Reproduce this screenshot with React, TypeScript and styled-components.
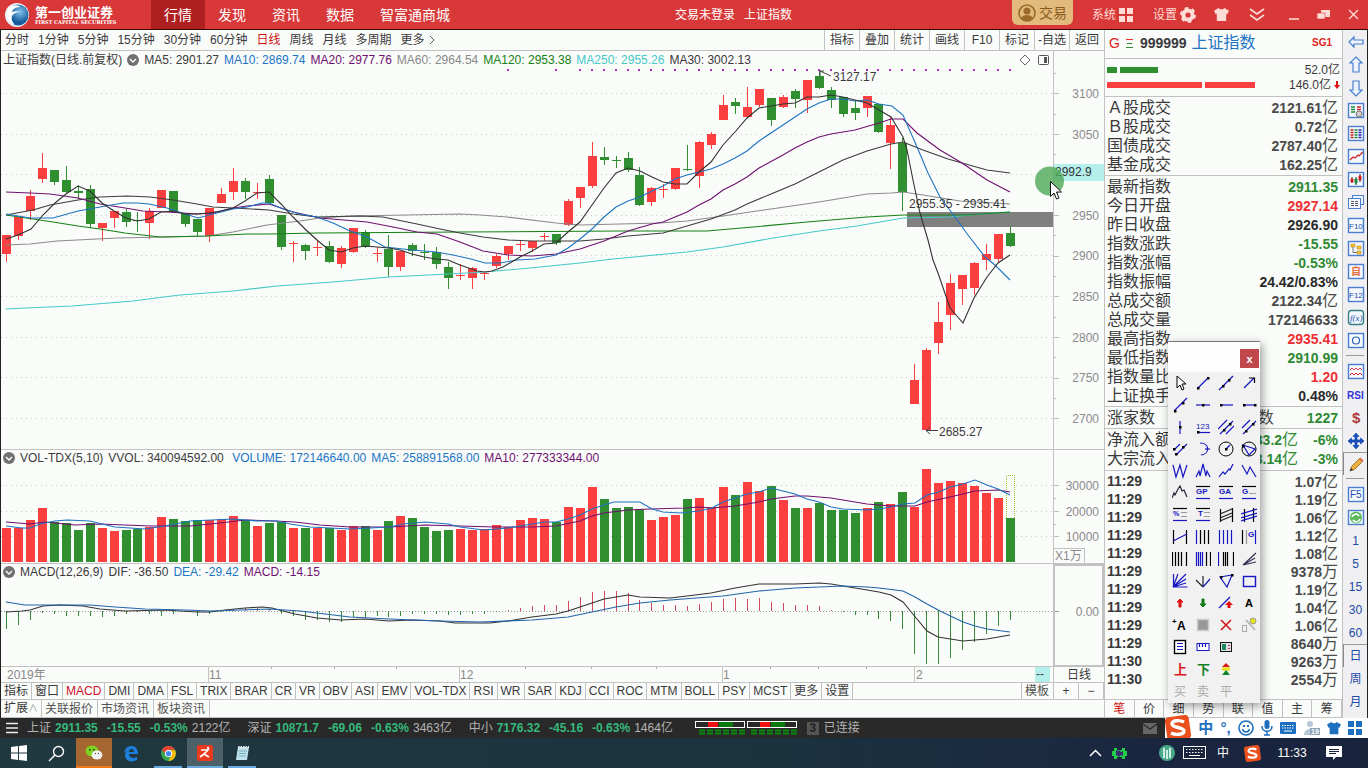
import React from "react";
import styled, { createGlobalStyle, css } from "styled-components";

const RED = "#fb3f41";
const GREEN = "#2f8f31";
const LINE = "#c2c2c2";
const INK = "#3a3a3a";
const SANS = `"Liberation Sans", "Noto Sans CJK SC", sans-serif`;

const Global = createGlobalStyle`
  * { box-sizing: border-box; }
  body { margin: 0; background: #fafcfa; color: ${INK}; font: 12px/16px ${SANS}; overflow: hidden; }
  button { font: inherit; color: inherit; background: none; border: 0; padding: 0; margin: 0; white-space: nowrap; cursor: pointer; }
  svg { display: block; flex: none; }
  table { border-collapse: collapse; border-spacing: 0; width: 100%; }
  td, th { padding: 0; font-weight: 400; text-align: left; white-space: nowrap; }
`;

const Page = styled.div`
  position: relative;
  min-height: 100vh;
  display: flex;
  flex-direction: column;
  overflow: hidden;
`;

/* ---------- title bar ---------- */
const TitleBar = styled.header`
  height: 30px;
  display: flex;
  align-items: stretch;
  background: #d83838;
  border-bottom: 1px solid #3a0808;
  color: #fff;
`;
const Brand = styled.div`
  width: 151px;
  display: flex;
  align-items: center;
  gap: 6px;
  padding-left: 5px;
`;
const BrandText = styled.div`
  display: flex;
  flex-direction: column;
  white-space: nowrap;
`;
const BrandName = styled.strong`
  font: 700 13px/15px "Noto Sans CJK SC", sans-serif;
`;
const BrandSub = styled.span`
  font: 700 5px/7px "DejaVu Serif", serif;
`;
const Nav = styled.nav`
  display: flex;
`;
const NavButton = styled.button<{ $on?: boolean }>`
  padding: 0 13px;
  font-size: 14px;
  background: ${(p) => (p.$on ? "#ae2020" : "transparent")};
`;
const TitleText = styled.div`
  flex: 1;
  display: flex;
  justify-content: center;
  align-items: center;
  gap: 9px;
  padding-right: 8px;
`;
const TitleTools = styled.div`
  display: flex;
  align-items: center;
  padding-right: 9px;
  color: #ffdcd6;
`;
const TradeButton = styled.button`
  align-self: flex-start;
  width: 61px;
  height: 25px;
  margin-right: 19px;
  display: flex;
  align-items: center;
  justify-content: center;
  gap: 3px;
  border-radius: 0 0 6px 6px;
  background: #e2ba7c;
  color: #8a5a1c;
  font-size: 14px;
`;
const TitleTool = styled.button<{ $gap: number }>`
  display: flex;
  align-items: center;
  gap: 3px;
  margin-right: ${(p) => p.$gap}px;
`;

/* ---------- layout ---------- */
const Body = styled.main`
  flex: 1;
  display: flex;
  border-left: 1px solid #222;
  border-right: 1px solid #222;
`;
const Charts = styled.section`
  flex: 1;
  min-width: 0;
  display: flex;
  flex-direction: column;
`;
const Bar = styled.div<{ $h: number }>`
  height: ${(p) => p.$h}px;
  display: flex;
  align-items: stretch;
  border-bottom: 1px solid ${LINE};
`;
const PeriodList = styled.div`
  flex: 1;
  display: flex;
  gap: 9px;
  padding-left: 4px;
`;
const Period = styled.button<{ $on?: boolean }>`
  display: flex;
  align-items: center;
  gap: 4px;
  color: ${(p) => (p.$on ? "#d00f0f" : INK)};
`;
const Action = styled.button`
  width: 35px;
  border-left: 1px solid ${LINE};
`;
const Panel = styled.div`
  display: flex;
  border-bottom: 1px solid ${LINE};
`;
const Plot = styled.div`
  flex: 1;
  min-width: 0;
  position: relative;
`;
const Legend = styled.div<{ $h: number }>`
  height: ${(p) => p.$h}px;
  display: flex;
  align-items: center;
  gap: 5px;
  padding-left: 2px;
  white-space: nowrap;
`;
const Swatch = styled.span<{ $c: string }>`
  color: ${(p) => p.$c};
`;
const Spacer = styled.span`
  flex: 1;
`;
const Axis = styled.div<{ $framed?: boolean }>`
  width: 51px;
  border-left: 1px solid ${LINE};
  ${(p) =>
    p.$framed &&
    css`
      border: 2px solid ${LINE};
      border-bottom-width: 1px;
    `}
`;
const DateText = styled.div`
  flex: 1;
`;
const DateCell = styled.button`
  width: 51px;
  border-left: 1px solid ${LINE};
`;
const Tab = styled.button<{ $on?: boolean }>`
  padding: 0 3px;
  border-right: 1px solid ${LINE};
  color: ${(p) => (p.$on ? "#d0102a" : INK)};
`;
const Caret = styled.span`
  font-size: 10px;
  color: #999;
`;
const WideTab = styled(Tab)`
  padding: 0 4px 0 3px;
  color: #555;
`;
const TemplateTab = styled(WideTab)`
  border-left: 1px solid ${LINE};
`;
const ZoomTab = styled(Tab)`
  width: 25px;
`;

/* ---------- quote panel ---------- */
const Quote = styled.aside`
  width: 238px;
  display: flex;
  flex-direction: column;
  border-left: 1px solid ${LINE};
`;
const QuoteHead = styled.div`
  height: 29px;
  display: flex;
  align-items: center;
  gap: 5px;
  padding: 0 10px 2px 4px;
  border-bottom: 1px solid ${LINE};
  font-size: 14px;
`;
const QuoteCode = styled.span`
  color: #e02222;
`;
const QuoteName = styled.span`
  flex: 1;
  font-size: 16px;
  color: #1b75c4;
`;
const Sig = styled.b`
  font-size: 10px;
  color: #e02222;
`;
const Flow = styled.div`
  height: 38px;
  padding: 3px 2px 0 2px;
  border-bottom: 1px solid ${LINE};
`;
const FlowRow = styled.div`
  height: 15px;
  display: flex;
  align-items: center;
  gap: 3px;
`;
const FlowBar = styled.i<{ $w: number; $c: string }>`
  width: ${(p) => p.$w}px;
  height: 6px;
  background: ${(p) => p.$c};
`;
const Group = styled.div<{ $h?: number }>`
  padding: 1px 4px 0 2px;
  border-bottom: 1px solid ${LINE};
  ${(p) => (p.$h ? `height: ${p.$h}px;` : "flex: 1;")}
`;
const Row = styled.tr<{ $h: number }>`
  height: ${(p) => p.$h}px;
  line-height: ${(p) => p.$h - 1}px;
  font-size: 16px;
`;
const Value = styled.td<{ $c?: string }>`
  && {
    text-align: right;
  }
  color: ${(p) => p.$c || "#4a4a4a"};
  b {
    font-size: 14px;
    line-height: 12px;
  }
`;
const MidValue = styled(Value)<{ $pad: number }>`
  width: 100%;
  && {
    padding-right: ${(p) => p.$pad}px;
  }
`;
const Time = styled.th`
  && {
    font-size: 14px;
    font-weight: 700;
  }
`;
const QuoteTabs = styled.div`
  height: 18px;
  display: flex;
  border-bottom: 1px solid ${LINE};
`;
const QuoteTab = styled.button<{ $on?: boolean }>`
  flex: 1;
  border-right: 1px solid ${LINE};
  color: ${(p) => (p.$on ? "#d00f0f" : INK)};
`;

/* ---------- side icons ---------- */
const Side = styled.nav`
  width: 25px;
  display: flex;
  flex-direction: column;
  align-items: stretch;
  background: #f0f0f2;
  border-left: 1px solid ${LINE};
`;
const SideButton = styled.button<{ $down?: boolean }>`
  height: 23px;
  display: flex;
  align-items: center;
  justify-content: center;
  color: #1c4aa8;
  border-left: 1px solid ${(p) => (p.$down ? "#888" : "transparent")};
  border-top: 1px solid ${(p) => (p.$down ? "#999" : "transparent")};
`;
const SideRule = styled.hr`
  width: 18px;
  height: 1px;
  margin: 3px auto 4px;
  border: 0;
  background: #999;
`;

/* ---------- drawing tools ---------- */
const Palette = styled.section`
  position: absolute;
  right: 108px;
  top: 341px;
  width: 92px;
  height: 362px;
  background: #f1f1f1;
  border-top: 1px solid #777;
  box-shadow: 2px 3px 9px rgba(0, 0, 0, 0.4);
`;
const PaletteTop = styled.div`
  height: 30px;
  display: flex;
  justify-content: flex-end;
  padding: 7px 1px 4px 0;
  background: #fdfdfd;
`;
const CloseButton = styled.button`
  width: 19px;
  background: #c0474c;
  color: #fff;
  font-weight: 700;
  font-size: 11px;
`;
const ToolGrid = styled.div`
  display: grid;
  grid-template-columns: repeat(4, 23px);
  grid-auto-rows: 22px;
`;
const Tool = styled.button`
  display: flex;
  align-items: center;
  justify-content: center;
`;

/* ---------- bottom bars ---------- */
const Status = styled.footer`
  height: 20px;
  display: flex;
  align-items: center;
  padding-left: 6px;
  background: #292929;
  color: #b4b4b4;
  white-space: nowrap;
`;
const Indices = styled.div`
  display: flex;
  gap: 17px;
  padding-left: 8px;
`;
const Index = styled.span`
  display: flex;
  align-items: center;
  gap: 4px;
  b {
    color: #35b87c;
    font-size: 12px;
  }
  b + b {
    margin-left: 5px;
  }
`;
const Badge = styled.b`
  width: 12px;
  height: 13px;
  margin: 0 5px 0 10px;
  background: #555;
  color: #222;
  line-height: 13px;
  text-align: center;
`;
const Ime = styled.div`
  height: 21px;
  width: 203px;
  display: flex;
  align-items: center;
  justify-content: space-between;
  padding-right: 6px;
  background: #fff;
  color: #1d6fc0;
  font-size: 15px;
`;
const Taskbar = styled.footer`
  height: 30px;
  display: flex;
  align-items: stretch;
  background: linear-gradient(90deg, #20383f, #1b333f 55%, #1a2640 85%, #18243c);
  color: #fff;
`;
const Task = styled.button<{ $w: number; $bg?: string; $line?: string; $gap?: number }>`
  width: ${(p) => p.$w}px;
  margin-right: ${(p) => p.$gap || 0}px;
  display: flex;
  align-items: center;
  justify-content: center;
  background: ${(p) => p.$bg || "transparent"};
  border-top: 2px solid transparent;
  border-bottom: 2px solid ${(p) => p.$line || "transparent"};
`;
const Tray = styled.div`
  margin-left: auto;
  display: flex;
  align-items: center;
  padding-right: 19px;
`;
const TrayItem = styled.button<{ $w: number; $gap?: number }>`
  width: ${(p) => p.$w}px;
  margin-right: ${(p) => p.$gap || 0}px;
  display: flex;
  justify-content: center;
`;

/* ---------- pointer ---------- */
const Pointer = styled.svg`
  position: absolute;
  left: 1035px;
  top: 166px;
  pointer-events: none;
`;

/* ---------- chart data ---------- */
const X0 = 6.5;
const STEP = 11.952;
const cx = (i: number) => Math.round(X0 + i * STEP - 0.5) + 0.5;

// kind, high, body top, body bottom, low
type Candle = [string, number, number, number, number];
const candles: Candle[] = [
  ["r", 235, 235, 254, 262], ["r", 217, 217, 236, 240], ["r", 190, 196, 211, 220], ["r", 153, 168, 179, 183],
  ["g", 170, 170, 182, 185], ["g", 166, 180, 192, 193], ["g", 185, 191, 193, 199], ["g", 185, 189, 224, 228],
  ["r", 223, 223, 228, 241], ["r", 211, 211, 218, 228], ["g", 209, 212, 222, 227], ["g", 212, 220, 221, 232],
  ["r", 208, 211, 223, 239], ["r", 190, 190, 208, 208], ["g", 191, 191, 212, 212], ["g", 213, 213, 224, 227],
  ["g", 219, 219, 232, 237], ["r", 208, 208, 236, 242], ["r", 188, 194, 203, 203], ["r", 168, 181, 192, 200],
  ["g", 178, 181, 192, 199], ["r", 183, 192, 193, 199], ["g", 175, 179, 203, 203], ["g", 215, 215, 247, 250],
  ["r", 241, 243, 244, 262], ["g", 244, 245, 251, 260], ["r", 241, 247, 248, 256], ["g", 241, 246, 262, 263],
  ["r", 246, 248, 264, 268], ["r", 228, 228, 252, 253], ["g", 230, 232, 247, 248], ["r", 247, 253, 254, 262],
  ["g", 235, 249, 267, 277], ["r", 251, 251, 267, 271], ["g", 243, 245, 251, 256], ["g", 244, 252, 253, 260],
  ["g", 247, 252, 264, 269], ["g", 262, 267, 278, 289], ["r", 264, 275, 276, 280], ["r", 267, 268, 278, 289],
  ["r", 272, 273, 274, 280], ["r", 254, 256, 266, 268], ["r", 246, 246, 254, 260], ["r", 240, 244, 245, 251],
  ["r", 241, 241, 248, 252], ["r", 233, 236, 237, 241], ["g", 234, 234, 243, 245], ["r", 199, 201, 225, 226],
  ["r", 187, 187, 198, 208], ["r", 142, 156, 186, 188], ["g", 147, 157, 160, 165], ["g", 156, 160, 161, 168],
  ["g", 152, 158, 170, 172], ["g", 167, 175, 205, 206], ["r", 187, 188, 202, 206], ["r", 184, 189, 190, 198],
  ["r", 168, 168, 189, 190], ["g", 145, 169, 170, 171], ["r", 141, 142, 176, 188], ["r", 132, 134, 145, 149],
  ["r", 95, 105, 120, 120], ["g", 98, 102, 106, 114], ["r", 87, 107, 117, 118], ["r", 89, 89, 105, 107],
  ["g", 98, 98, 120, 126], ["r", 95, 97, 107, 108], ["g", 89, 91, 99, 108], ["r", 80, 80, 100, 113],
  ["g", 71, 76, 88, 89], ["g", 87, 90, 100, 108], ["g", 97, 97, 114, 117], ["g", 100, 108, 113, 120],
  ["r", 96, 96, 108, 117], ["g", 104, 104, 132, 133], ["r", 117, 125, 143, 169], ["g", 138, 143, 192, 211],
  ["r", 364, 380, 404, 404], ["r", 348, 350, 430, 430], ["r", 302, 322, 343, 354], ["r", 274, 283, 315, 330],
  ["r", 275, 275, 289, 305], ["r", 262, 263, 288, 295], ["r", 244, 254, 260, 270], ["r", 234, 234, 259, 263],
  ["g", 227, 233, 246, 247],
];
const volumes = [
  528, 528, 520, 508, 522, 523, 530, 523, 528, 531, 530, 529, 527, 517, 519, 521, 520, 520, 519, 516, 520, 526, 523,
  522, 528, 528, 528, 528, 530, 526, 526, 530, 521, 516, 518, 527, 531, 530, 529, 530, 529, 525, 527, 520, 518, 519,
  522, 507, 508, 487, 499, 508, 507, 509, 520, 517, 515, 499, 498, 507, 487, 495, 482, 491, 486, 500, 508, 508, 503,
  510, 510, 513, 508, 502, 504, 492, 507, 469, 483, 481, 483, 486, 493, 498, 518,
];
const hist = [
  629, 625, 620, 613, 614, 616, 616, 616, 617, 616, 614, 612, 614, 616, 614, 612, 616, 614, 611, 609, 608, 608, 609,
  614, 616, 620, 620, 622, 622, 617, 617, 616, 617, 616, 614, 614, 614, 615, 615, 614, 614, 612, 610, 608, 606, 605,
  605, 601, 597, 592, 591, 591, 593, 600, 603, 605, 605, 606, 604, 602, 599, 598, 599, 598, 602, 603, 605, 605, 606,
  610, 612, 615, 615, 619, 621, 629, 654, 664, 664, 658, 650, 642, 634, 626, 620,
];

const ma = {
  m5: "6,239 18,235 31,229 43,215 55,203 66,194 78,186 90,191 102,203 114,211 126,218 137,221 149,219 161,212 173,211 185,214 197,214 209,213 221,211 233,208 245,201 257,193 269,192 281,204 293,217 305,229 317,240 329,250 341,252 353,248 365,246 389,248 400,250 412,254 424,257 436,259 448,260 460,265 477,271 485,272 492,271 503,267 520,257 532,251 544,244 556,243 568,232 580,222 592,205 604,188 616,173 628,168 640,171 652,177 663,182 675,184 687,184 699,172 711,162 723,145 735,132 747,118 759,108 771,106 783,104 795,103 807,97 819,97 831,95 843,97 855,100 867,103 879,110 891,117 903,137 907,150 913,180 920,213 928,240 933,260 938,273 950,308 963,323 974,298 987,277 998,263 1010,255",
  m10: "6,214 18,216 30,218 53,218 78,211 100,207 123,203 137,203 149,204 167,208 182,213 198,218 217,213 233,209 247,207 262,203 269,203 283,209 300,214 317,217 333,223 348,230 367,237 385,247 412,250 436,252 453,255 471,259 485,263 500,263 517,260 535,259 556,255 568,248 580,239 592,229 604,217 616,207 628,201 640,197 652,191 663,186 675,179 687,175 699,172 711,169 723,164 735,158 747,151 759,141 771,133 783,125 795,117 807,109 819,103 831,99 843,99 855,101 867,100 879,104 892,106 903,115 917,147 928,173 940,197 955,217 968,235 985,257 995,265 1010,280",
  m20: "6,192 30,193 50,194 78,198 100,204 125,208 143,211 167,212 198,214 213,213 233,208 247,206 269,204 293,212 320,218 367,222 393,227 417,232 437,234 460,242 483,251 508,255 532,256 556,254 580,249 604,241 616,236 628,231 652,224 663,222 675,217 687,212 699,205 711,199 723,190 735,184 747,177 759,168 783,155 795,148 807,142 819,137 831,134 855,130 879,123 891,119 903,119 917,133 940,150 962,163 987,180 1010,192",
  m30: "6,215 33,210 50,205 78,200 100,197 127,196 150,197 173,200 197,204 213,207 233,208 269,210 293,214 317,217 360,216 383,217 417,224 440,229 460,233 483,237 508,240 532,241 580,241 604,239 628,236 663,233 687,226 711,219 735,210 747,204 771,194 795,184 819,172 843,160 867,151 891,144 903,142 923,150 948,159 962,163 987,170 1010,173",
  m60: "6,245 30,244 57,241 117,238 167,237 207,236 233,232 267,225 300,221 320,218 350,216 407,215 460,214 480,215 507,217 556,223 580,225 620,224 660,223 687,221 723,216 771,209 819,202 867,194 891,193 903,192 923,195 960,201 1010,204",
  m120: "6,215 33,219 53,222 78,226 100,229 125,233 160,237 207,236 247,234 269,234 317,233 460,232 620,231 707,231 753,227 807,222 867,217 903,215 967,215 1010,212",
  m250: "6,309 25,308 72,306 133,301 180,295 233,291 277,286 333,282 389,277 448,274 485,272 530,268 580,263 613,259 687,252 723,247 773,238 819,231 857,226 903,218 950,217 980,214 1010,212",
  v5: "6,526 22,528 30,528 40,524 55,521 67,520 90,521 102,524 115,527 145,529 165,526 190,521 233,519 257,521 277,521 290,524 310,527 350,529 390,527 403,524 425,522 448,524 460,527 484,530 508,528 532,524 545,522 556,522 568,519 580,515 592,509 604,505 614,502 640,502 652,509 663,512 680,513 699,511 712,508 723,502 735,498 747,494 759,492 771,488 783,491 795,494 807,499 819,502 831,507 843,509 867,510 879,509 891,507 903,504 915,503 927,495 939,492 950,487 963,484 975,480 987,485 998,489 1010,495",
  v10: "6,522 30,524 45,522 75,525 100,524 125,525 150,526 190,526 220,523 245,520 275,521 295,522 320,525 350,527 390,527 425,525 460,526 495,527 532,527 556,526 580,521 592,516 604,513 628,510 650,509 685,508 699,507 712,508 735,506 759,502 771,499 795,496 807,496 831,498 855,502 867,504 891,506 915,506 927,502 950,497 975,491 998,490 1010,492",
  dif: "6,612 22,611 30,610 43,606 60,605 83,606 100,609 125,611 165,610 180,611 197,612 210,612 225,610 245,608 262,607 272,608 283,611 295,614 317,618 341,620 365,619 389,621 412,620 440,621 455,623 490,623 508,621 532,617 556,614 568,611 580,607 592,603 604,599 616,597 628,595 640,597 670,598 687,596 711,593 735,588 759,584 795,584 819,583 831,584 855,588 879,592 891,595 903,602 912,613 927,631 938,637 963,641 987,639 1010,635",
  dea: "6,602 25,605 90,605 115,607 145,609 185,610 210,611 240,610 270,609 300,611 325,614 350,617 389,619 440,621 480,622 532,620 568,617 592,612 616,607 640,603 670,600 723,596 759,591 795,588 843,586 867,587 879,588 903,591 915,597 927,604 940,611 963,622 975,626 987,629 1010,632",
};

const Curve = ({ d, c }: { d: string; c: string }) => <polyline points={d} fill="none" stroke={c} strokeWidth={1.1} />;
const Dotted = ({ y }: { y: number }) => (
  <line x1={1} x2={1053} y1={y} y2={y} stroke="#c9c9c9" strokeDasharray="1 4" />
);

const priceTicks: [number, string][] = [
  [93.5, "3100"], [134.5, "3050"], [215.5, "2950"], [255.5, "2900"], [296.5, "2850"], [337.5, "2800"],
  [377.5, "2750"], [418.5, "2700"],
];

function PriceChart() {
  return (
    <svg width="100%" height={380} viewBox="1 69 1052 380" preserveAspectRatio="xMaxYMin meet">
      {[93.5, 134.5, 174.5, 215.5, 255.5, 296.5, 337.5, 377.5, 418.5].map((y) => <Dotted key={y} y={y} />)}
      <rect x={907} y={212} width={146} height={15} fill="#808080" />
      {candles.map(([k, h, t, b, l], i) => {
        const c = k === "r" ? RED : GREEN;
        return (
          <g key={i} fill={c} shapeRendering="crispEdges">
            <rect x={cx(i) - 0.5} y={h} width={1} height={l - h} />
            <rect x={cx(i) - 4.5} y={t} width={9} height={Math.max(1, b - t)} />
          </g>
        );
      })}
      <Curve d={ma.m60} c="#8a8a8a" />
      <Curve d={ma.m250} c="#45c9c9" />
      <Curve d={ma.m120} c="#158015" />
      <Curve d={ma.m30} c="#3c3c3c" />
      <Curve d={ma.m20} c="#701070" />
      <Curve d={ma.m10} c="#1e73c0" />
      <Curve d={ma.m5} c="#333" />
      {[42, 46, ...Array.from({ length: 36 }, (_, i) => i + 48), 84].map((i) => (
        <rect key={i} x={cx(i) - 1.5} y={69} width={2} height={2} fill="#b030c0" />
      ))}
      <g fontFamily="Liberation Sans" fontSize={12} fill={INK}>
        <path d="M820 76v-5h4M820 71l11 5" fill="none" stroke="#444" />
        <text x={833} y={81}>3127.17</text>
        <text x={909} y={208}>2955.35 - 2935.41</text>
        <path d="M926 430.500h12M930 427l-4 3.500 4 3.500" fill="none" stroke="#444" />
        <text x={939} y={436}>2685.27</text>
      </g>
    </svg>
  );
}

function VolumeChart() {
  return (
    <svg width="100%" height={97} viewBox="1 466 1052 97" preserveAspectRatio="xMaxYMin meet">
      {[485.5, 511.5, 536.5].map((y) => <Dotted key={y} y={y} />)}
      {volumes.map((v, i) => (
        <rect key={i} x={cx(i) - 4.5} y={v} width={9} height={562 - v} fill={candles[i][0] === "r" ? RED : GREEN} />
      ))}
      <path d="M1006.500 518v-42.500h8v42.500" fill="none" stroke="#9cc020" strokeDasharray="1 1" />
      <Curve d={ma.v10} c="#701070" />
      <Curve d={ma.v5} c="#1e73c0" />
    </svg>
  );
}

function MacdChart() {
  return (
    <svg width="100%" height={86} viewBox="1 580 1052 86" preserveAspectRatio="xMaxYMin meet">
      <line x1={1} x2={1053} y1={611.5} y2={611.5} stroke="#999" strokeDasharray="1 2" />
      {hist.map((v, i) => (
        <rect
          key={i}
          x={cx(i) - 0.5}
          y={Math.min(v, 611)}
          width={1}
          height={Math.max(1, Math.abs(v - 611))}
          fill={v < 611 ? "#d04a60" : "#3a8a3c"}
        />
      ))}
      <Curve d={ma.dif} c="#333" />
      <Curve d={ma.dea} c="#1e66a8" />
    </svg>
  );
}

const Fold = () => (
  <svg width={12} height={12} viewBox="0 0 12 12">
    <circle cx={6} cy={6} r={6} fill="#707070" />
    <path d="M3 5l3 3 3-3" fill="none" stroke="#fff" strokeWidth={1.4} />
  </svg>
);

/* ---------- tool palette icons (16 x 16) ---------- */
const B = "#1616c4";
const ln = (d: string, c = B, w = 1.2) => <path d={d} stroke={c} strokeWidth={w} fill="none" />;
const dot = (x: number, y: number) => <rect x={x - 1} y={y - 1} width={2.5} height={2.5} fill="#000" />;
const glyph = (t: string, x: number, y: number, s: number, c = B, w = 700) => (
  <text x={x} y={y} fontFamily="Liberation Sans, Noto Sans CJK SC" fontSize={s} fontWeight={w} fill={c}>{t}</text>
);
const tools: [string, React.ReactNode][] = [
  ["选择", <path d="M5 1v12l3-3 2 5 2-1-2-5h4z" fill="#fff" stroke="#000" />],
  ["线段", <>{ln("M3 13L13 3")}{dot(3, 13)}{dot(13, 3)}</>],
  ["直线", <>{ln("M1 15L15 1")}{dot(5, 11)}{dot(11, 5)}</>],
  ["箭头", <>{ln("M3 13L13 3")}{ln("M8 3h5.500v5", "#000")}</>],
  ["射线", <>{ln("M2 14L15 1")}{dot(3, 14)}{dot(11, 6)}</>],
  ["水平线", <>{ln("M1 8h14")}{dot(8, 8)}</>],
  ["水平射线", <>{ln("M3 8h12")}{dot(3, 8)}</>],
  ["价格线", <>{ln("M3 8h11")}{dot(3, 8)}{dot(14, 8)}</>],
  ["垂直线", <>{ln("M8 2v13")}{dot(8, 8)}</>],
  ["数列", <>{glyph("123", 1, 10, 8, B, 400)}{ln("M2 13.500h13")}{dot(3, 13)}</>],
  ["平行线", <>{ln("M0 10L9 1M2 15L15 2M8 15L16 7")}{dot(6, 11)}{dot(12, 5)}</>],
  ["通道", <>{ln("M1 9L9 1M2 15L15 2")}{dot(5, 12)}{dot(12, 5)}</>],
  ["平行射线", <>{ln("M2 9L8 3M4 14L15 3")}{dot(2, 8)}{dot(4, 13)}{dot(11, 6)}</>],
  ["圆弧", <>{ln("M5 2c10 0 10 11 1 12")}{ln("M10 8h5", B)}</>],
  ["圆", <><circle cx={8} cy={8} r={7} fill="none" stroke="#000" />{ln("M8 8l4-4")}{dot(8, 8)}</>],
  ["外接圆", <><circle cx={8} cy={8} r={7} fill="none" stroke="#000" />{ln("M2 4l12 4-6 6z")}{dot(2, 5)}</>],
  ["波浪W", <>{ln("M1 2l3 12 4-12 3 12 4-12")}</>],
  ["波浪M", <>{ln("M1 14l3-6 1 5 3-12 3 12 1-5 3 6")}</>],
  ["上升浪", <>{ln("M1 14l4-5 2 2 4-5 1 1 3-6")}</>],
  ["下降浪", <>{ln("M1 2l5 9 3-7 6 10")}</>],
  ["八浪线", <>{ln("M0 13l2-5 1 2 3-6 2-3 2 5 2-1 3 7", "#223")}</>],
  ["黄金价位", <>{ln("M1 1.500h14", "#000")}{glyph("GP", 1, 9, 8)}{ln("M1 13.500h14")}</>],
  ["黄金目标", <>{ln("M1 1.500h14", "#000")}{glyph("GA", 1, 9, 8)}{ln("M1 13.500h14")}</>],
  ["黄金分割", <>{ln("M1 1.500h14", "#000")}{glyph("G", 1, 9, 8)}{ln("M8 8.500h7", "#aaa")}{ln("M1 13.500h14")}</>],
  ["百分比", <>{ln("M1 1.500h14", "#000")}{glyph("%", 1, 9, 7)}{ln("M9 5.500h6M9 9.500h6", "#999")}{ln("M1 13.500h14")}</>],
  ["波段线", <>{ln("M1 1.500h14", "#000")}{glyph("T", 3, 9, 8)}{ln("M9 5.500h6M9 9.500h6", "#999")}{ln("M1 13.500h14")}</>],
  ["回归带", <>{ln("M2.500 2v13M14.500 1v14", "#000")}{ln("M2 7l12-5M2 11l12-5M2 14l12-5", "#222")}</>],
  ["回归通道", <>{ln("M3.500 2v13M12.500 1v14", "#000")}{ln("M0 7l16-5M0 11l16-5M0 14l16-5")}</>],
  ["回归线", <>{ln("M1.500 1v14M14.500 1v14", "#000")}{ln("M1 12l14-7")}</>],
  ["周期线", <>{ln("M1.500 1v14", B)}{ln("M5.500 1v14M9.500 1v14M13.500 1v14", "#000")}</>],
  ["等分周期", <>{ln("M1.500 1v14M5.500 1v14M9.500 1v14M13.500 1v14")}</>],
  ["黄金周期", <>{ln("M1.500 1v14", "#000")}{ln("M5.500 1v14", "#999")}{glyph("G", 7, 8, 8)}{ln("M14.500 1v14")}</>],
  ["费氏周期", <>{ln("M.500 1v14M3.500 1v14M6.500 1v14M9.500 1v14M14.500 1v14", "#000")}</>],
  ["卢卡斯", <>{ln("M1.500 1v14M3.500 1v14M5.500 1v14M7.500 1v14")}{ln("M11.500 1v14M15.500 1v14", "#000")}</>],
  ["时间尺", <>{ln("M.500 1v14")}{ln("M5.500 1v14M7.500 1v14M9.500 1v14M15.500 1v14", "#000")}</>],
  ["阻速线", <>{ln("M2 14L15 2M2 14l12-7M2 14l13-3", "#335")}</>],
  ["江恩角", <>{ln("M1.500 1v13h14M1 14L6 1M1 14L14 1M1 14l13-8M1 14l13-4")}</>],
  ["扇形", <>{ln("M8 14V3M8 14L1 7", "#223")}{ln("M8 14l7-8")}</>],
  ["三角形", <>{ln("M2 4l12-2-5 12z")}{dot(3, 4)}{dot(14, 2)}</>],
  ["矩形", <rect x={2.5} y={3.5} width={12} height={10} fill="none" stroke={B} strokeWidth={1.4} />],
  ["涨标记", <path d="M8 4l3 3H9v5H7V7H5z" fill="#e01010" stroke="#e01010" />],
  ["跌标记", <path d="M8 12l3-3H9V4H7v5H5z" fill="#107a18" stroke="#107a18" />],
  ["标记线", <>{ln("M1 13L12 2")}<path d="M11 6l4 4h-2.500v3h-3v-3H7z" fill="#e01010" /></>],
  ["文字", glyph("A", 4, 12, 11, "#000")],
  ["字注", <>{glyph("A", 5, 13, 12, "#000")}{glyph("+", 0, 7, 8, "#000")}</>],
  ["填充", <rect x={2.5} y={2.5} width={11} height={11} fill="#999" stroke="#ccc" strokeWidth={1.5} />],
  ["删除", ln("M3 3l10 10M13 3L3 13", "#d01818", 1.6)],
  ["全部删除", <><rect x={1.5} y={8.5} width={4} height={6} fill="none" stroke="#aaa" />{ln("M5 3l9 10", "#aaa")}<circle cx={12} cy={4} r={3} fill="#e8e010" stroke="#999" /></>],
  ["列表", <><rect x={2.5} y={1.5} width={11} height={13} fill="#fff" stroke="#000" strokeWidth={1.4} />{ln("M5 4.500h6M5 7.500h6M5 10.500h6")}</>],
  ["标尺", <><rect x={2} y={4.5} width={12} height={7} fill="#fff" stroke={B} />{ln("M4.500 5v3M7.500 5v3M10.500 5v3")}</>],
  ["图例", <><rect x={2.5} y={3.5} width={11} height={9} fill="#dde" stroke="#111" /><path d="M4 5h4v6H4z" fill="#1a8a5a" />{ln("M10 6.500h2M10 9.500h2", "#c33")}</>],
  ["", null],
  ["上", glyph("上", 2, 13, 13, "#d81818")],
  ["下", glyph("下", 2, 13, 13, "#14802a")],
  ["涨平跌", <><path d="M8 2l4 4H4z" fill="#d81818" /><path d="M4 6.500h8v3H4z" fill="#e8e010" /><path d="M8 9l4 5H4z" fill="#14802a" /></>],
  ["", null],
  ["买", glyph("买", 2, 13, 12, "#aaa", 400)],
  ["卖", glyph("卖", 2, 13, 12, "#aaa", 400)],
  ["平", glyph("平", 2, 13, 12, "#aaa", 400)],
];

/* ---------- side icons (18 x 18) ---------- */
const S = "#4a7fd0";
const frame = <rect x={1.5} y={1.5} width={15} height={14} fill="#f4f8ff" stroke={S} strokeWidth={1.4} />;
const out = (d: string) => <path d={d} fill="#eef4ff" stroke={S} strokeWidth={1.2} />;
const label = (t: string, c = "#1e4fae", s = 10, x = 3) => glyph(t, x, 12, s, c, 400);
const sideA: [string, React.ReactNode][] = [
  ["后退", out("M2 9l5-5v3h9v4H7v3z")],
  ["上翻", out("M9 1l6 6h-3v9H6V7H3z")],
  ["下翻", out("M9 17l6-6h-3V2H6v9H3z")],
  ["报价", <>{frame}<path d="M4 5h4M4 7.500h4M4 10h4" stroke="#1a8a3a" strokeWidth={1.5} /><path d="M10 5h4M10 7.500h4" stroke="#d02020" strokeWidth={1.5} /><circle cx={12} cy={12} r={3} fill="#ccc" stroke="#777" /></>],
  ["行情列表", <>{frame}<path d="M3.500 5h3M3.500 7.500h3M3.500 10h3M3.500 12.500h3" stroke="#d02020" strokeWidth={1.4} /><path d="M7.500 5h3M7.500 7.500h3M7.500 10h3M7.500 12.500h3" stroke="#1a8a3a" strokeWidth={1.4} /><path d="M11.500 5h3M11.500 7.500h3M11.500 10h3M11.500 12.500h3" stroke="#2020c0" strokeWidth={1.4} /></>],
  ["分时图", <>{frame}<path d="M3 12l3-3 2 1 3-3 1 1 4-4" fill="none" stroke="#d02020" strokeWidth={1.2} /></>],
  ["K线图", <>{frame}<path d="M5 6v6M9 6v8M13 3v8" stroke="#333" /><path d="M4 8h2v3H4zM12 5h2v4h-2z" fill="#d02020" stroke="#d02020" /><path d="M8 8h2v4H8z" fill="#1a8a3a" stroke="#1a8a3a" /></>],
  ["多窗口", <><rect x={5.5} y={1.5} width={11} height={9} fill="#eef4ff" stroke={S} /><rect x={1.5} y={4.5} width={12} height={10} fill="#f4f8ff" stroke={S} /><path d="M4 7.500h7M4 9.500h7M4 11.500h7" stroke="#555" strokeDasharray="3 1" /></>],
  ["F10", <>{frame}{label("F10", "#1e4fae", 8, 2)}</>],
  ["板块", <>{frame}<path d="M4 4h4v3H4zM10 6h4v3h-4zM10 11h4v3h-4z" fill="#f6c33a" stroke="#b98a1a" strokeWidth={0.6} /><path d="M6 7v5.500h4" fill="none" stroke="#777" /></>],
  ["自选", <>{frame}{glyph("自", 4, 12, 10, "#e2703a")}</>],
  ["F12", <>{frame}{label("F12", "#1e4fae", 8, 2)}</>],
  ["公式", <><rect x={1.5} y={1.5} width={15} height={14} rx={3} fill="#f4f8ff" stroke="#3a8080" strokeWidth={1.4} /><text x={3} y={12} fontFamily="Liberation Serif" fontStyle="italic" fontSize={9} fill="#1e4fae">f(x)</text></>],
  ["圆形", <>{frame}<circle cx={9} cy={8.5} r={3.5} fill="none" stroke="#2a60b0" strokeWidth={1.2} /></>],
];
const sideB: [string, React.ReactNode][] = [
  ["叠加线", <>{frame}<path d="M3 7l2-2 2 2 2-2 2 2 2-2 2 2" fill="none" stroke="#c04060" /><path d="M3 12l2-2 2 2 2-2 2 2 2-2 2 2" fill="none" stroke="#d02020" /></>],
  ["RSI", glyph("RSI", 0, 13, 10, "#3333d8")],
  ["资金", <>{glyph("$", 5, 14, 15, "#b03a3a")}</>],
  ["移动", <path d="M9 1l3 3.500h-2V8h3.500V6L17 9l-3.500 3v-2H10v3.500h2L9 17l-3-3.500h2V10H4.500v2L1 9l3.500-3v2H8V4.500H6z" fill="#1a4fb8" stroke="#1a4fb8" strokeWidth={0.8} />],
];
const pencil = (
  <>
    <path d="M3 16l1.500-4.500 8-8 3 3-8 8z" fill="#f0b040" stroke="#8a6420" strokeWidth={0.8} />
    <path d="M12 4l1.500-1.500 3 3L15 7z" fill="#d86a50" />
    <path d="M3 16l1-3 2 2z" fill="#333" />
  </>
);

const Cell = ({ item, down }: { item: [string, React.ReactNode]; down?: boolean }) => (
  <SideButton aria-label={item[0]} $down={down}>
    <svg width={18} height={18} viewBox="0 0 18 18">{item[1]}</svg>
  </SideButton>
);

/* ---------- quote rows ---------- */
const R = "#ee2f33";
const G = "#2f8a33";
const K = "#2a2a2a";
const market: [string, string][] = [["Ａ股成交", "2121.61"], ["Ｂ股成交", "0.72"], ["国债成交", "2787.40"], ["基金成交", "162.25"]];
const facts: [string, string, string, string][] = [
  ["最新指数", "2911.35", G, ""], ["今日开盘", "2927.14", R, ""], ["昨日收盘", "2926.90", K, ""],
  ["指数涨跌", "-15.55", G, ""], ["指数涨幅", "-0.53%", G, ""], ["指数振幅", "24.42/0.83%", K, ""],
  ["总成交额", "2122.34", "", "亿"], ["总成交量", "172146633", "", ""], ["最高指数", "2935.41", R, ""],
  ["最低指数", "2910.99", G, ""], ["指数量比", "1.20", R, ""], ["上证换手", "0.48%", K, ""],
];
const ticks: [string, string, string][] = [
  ["11:29", "1.07", "亿"], ["11:29", "1.19", "亿"], ["11:29", "1.06", "亿"], ["11:29", "1.12", "亿"],
  ["11:29", "1.08", "亿"], ["11:29", "9378", "万"], ["11:29", "1.19", "亿"], ["11:29", "1.04", "亿"],
  ["11:29", "1.06", "亿"], ["11:29", "8640", "万"], ["11:30", "9263", "万"], ["11:30", "2554", "万"],
];
const indices = [
  ["上证", "2911.35", "-15.55", "-0.53%", "2122亿"],
  ["深证", "10871.7", "-69.06", "-0.63%", "3463亿"],
  ["中小", "7176.32", "-45.16", "-0.63%", "1464亿"],
];
const indicatorTabs = "指标 窗口 MACD DMI DMA FSL TRIX BRAR CR VR OBV ASI EMV VOL-TDX RSI WR SAR KDJ CCI ROC MTM BOLL PSY MCST 更多 设置".split(" ");

const Sogou = ({ size }: { size: number }) => (
  <svg width={size} height={size} viewBox="0 0 26 26">
    <rect x={1} y={1} width={24} height={24} rx={4} fill="#ea4f1e" transform="rotate(-8 13 13)" />
    <path d="M19 7c-4-2-12-2-12 2 0 4 12 3 12 7 0 4-9 4-13 2" fill="none" stroke="#fff" strokeWidth={3.4} />
  </svg>
);
const Shirt = ({ size, c }: { size: number; c: string }) => (
  <svg width={size} height={size} viewBox="0 0 16 16">
    <path d="M5 1c1 2 5 2 6 0l5 3-2 4-1-1v8H3V7L2 8 0 4z" fill={c} />
  </svg>
);
const Squares = ({ c }: { c: string }) => (
  <svg width={14} height={14} viewBox="0 0 14 14">
    <path d="M0 0h6v6H0zM8 0h6v6H8zM0 8h6v6H0zM8 8h6v6H8z" fill={c} />
  </svg>
);

export default function App() {
  return (
    <Page>
      <Global />
      <TitleBar>
        <Brand>
          <svg width={24} height={24} viewBox="0 0 24 24">
            <defs>
              <radialGradient id="globe" cx="0.6" cy="0.35">
                <stop offset="0" stopColor="#7fc4ea" />
                <stop offset="1" stopColor="#155a9c" />
              </radialGradient>
            </defs>
            <circle cx={12} cy={12} r={12} fill="#e9f3fa" />
            <circle cx={13} cy={12} r={10.5} fill="url(#globe)" />
            <path d="M3 6c4-5 11-4 12-2-5 0-8 3-8 5 3-1 6-1 8 0-4 0-7 2-8 4-1 3 0 6 3 9C3 20 0 13 3 6z" fill="#fff" />
          </svg>
          <BrandText>
            <BrandName>第一创业证券</BrandName>
            <BrandSub>FIRST CAPITAL SECURITIES</BrandSub>
          </BrandText>
        </Brand>
        <Nav>
          {["行情", "发现", "资讯", "数据", "智富通商城"].map((t, i) => (
            <NavButton key={t} $on={i === 0}>{t}</NavButton>
          ))}
        </Nav>
        <TitleText>
          <span>交易未登录</span>
          <span>上证指数</span>
        </TitleText>
        <TitleTools>
          <TradeButton>
            <svg width={18} height={18} viewBox="0 0 18 18">
              <circle cx={9} cy={9} r={8} fill="none" stroke="#9a6a28" strokeWidth={1.6} />
              <circle cx={9} cy={7} r={3.5} fill="#9a6a28" />
              <path d="M3.500 14c1-4 10-4 11 0-3 3-8 3-11 0z" fill="#9a6a28" />
            </svg>
            交易
          </TradeButton>
          <TitleTool $gap={20}>系统<Squares c="#ffdcd6" /></TitleTool>
          <TitleTool $gap={18}>
            设置
            <svg width={16} height={16} viewBox="0 0 16 16">
              <circle cx={8} cy={8} r={4.6} fill="none" stroke="#ffdcd6" strokeWidth={4} />
              <circle cx={8} cy={8} r={7} fill="none" stroke="#ffdcd6" strokeWidth={2} strokeDasharray="3.700 3.630" />
            </svg>
          </TitleTool>
          <TitleTool $gap={20} aria-label="皮肤"><Shirt size={15} c="#ffdcd6" /></TitleTool>
          <TitleTool $gap={24} aria-label="展开">
            <svg width={16} height={14} viewBox="0 0 16 14">
              <path d="M1 1l7 5 7-5M1 7l7 5 7-5" fill="none" stroke="#ffdcd6" strokeWidth={1.6} />
            </svg>
          </TitleTool>
          <TitleTool $gap={18} aria-label="最小化">
            <svg width={10} height={12} viewBox="0 0 10 12"><path d="M0 10h10" stroke="#ffdcd6" strokeWidth={1.5} /></svg>
          </TitleTool>
          <TitleTool $gap={18} aria-label="还原">
            <svg width={13} height={12} viewBox="0 0 13 12"><path d="M4 1h9v7H4z" fill="#ffdcd6" /><path d="M0 4h8v6H0z" fill="#ffdcd6" stroke="#d83838" strokeWidth={0.6} /></svg>
          </TitleTool>
          <TitleTool $gap={0} aria-label="关闭">
            <svg width={11} height={11} viewBox="0 0 11 11"><path d="M1 1l9 9M10 1l-9 9" stroke="#ffdcd6" strokeWidth={1.3} /></svg>
          </TitleTool>
        </TitleTools>
      </TitleBar>

      <Body>
        <Charts>
          <Bar $h={21}>
            <PeriodList>
              {["分时", "1分钟", "5分钟", "15分钟", "30分钟", "60分钟", "日线", "周线", "月线", "多周期"].map((t) => (
                <Period key={t} $on={t === "日线"}>{t}</Period>
              ))}
              <Period>
                更多
                <svg width={6} height={10} viewBox="0 0 6 10"><path d="M1 1l4 4-4 4" fill="none" stroke="#555" /></svg>
              </Period>
            </PeriodList>
            {["指标", "叠加", "统计", "画线", "F10", "标记", "-自选", "返回"].map((t) => <Action key={t}>{t}</Action>)}
          </Bar>

          <Panel>
            <Plot>
              <Legend $h={18}>
                <span>上证指数(日线.前复权)</span>
                <Fold />
                <Swatch $c={INK}>MA5: 2901.27</Swatch>
                <Swatch $c="#1b75c4">MA10: 2869.74</Swatch>
                <Swatch $c="#701070">MA20: 2977.76</Swatch>
                <Swatch $c="#888">MA60: 2964.54</Swatch>
                <Swatch $c="#158015">MA120: 2953.38</Swatch>
                <Swatch $c="#45c9c9">MA250: 2955.26</Swatch>
                <Swatch $c={INK}>MA30: 3002.13</Swatch>
                <Spacer />
                <svg width={34} height={12} viewBox="0 0 34 12">
                  <path d="M6 1l5 5-5 5-5-5z" fill="none" stroke="#666" />
                  <rect x={19.500} y={1.500} width={10} height={9} rx={1} fill="none" stroke="#555" />
                  <path d="M25 3h3v6h-3z" fill="#555" />
                </svg>
              </Legend>
              <PriceChart />
            </Plot>
            <Axis>
              <svg width={50} height={398} viewBox="1054 51 50 398">
                {Array.from({ length: 18 }, (_, i) => (
                  <path key={i} d={`M1054 ${Math.round(73 + i * 20.3)}.500h${i % 2 ? 5 : 2}`} stroke="#bbb" />
                ))}
                <g fontFamily="Liberation Sans" fontSize={12} fill="#8a8a8a" textAnchor="end">
                  {priceTicks.map(([y, t]) => <text key={t} x={1099} y={y + 4.500}>{t}</text>)}
                </g>
                <rect x={1054} y={164} width={50} height={17} fill="#b4efec" />
                <text x={1055} y={176} fontFamily="Liberation Sans" fontSize={12} fill="#333">2992.9</text>
              </svg>
            </Axis>
          </Panel>

          <Panel>
            <Plot>
              <Legend $h={16}>
                <Fold />
                <span>VOL-TDX(5,10)</span>
                <span>VVOL: 340094592.00</span>
                <Swatch $c="#1b75c4">&nbsp;VOLUME: 172146640.00</Swatch>
                <Swatch $c="#1b75c4">MA5: 258891568.00</Swatch>
                <Swatch $c="#701070">MA10: 277333344.00</Swatch>
              </Legend>
              <VolumeChart />
            </Plot>
            <Axis>
              <svg width={50} height={113} viewBox="1054 450 50 113">
                <path d="M1054 485.500h5M1054 511.500h5M1054 536.500h5M1054 498.500h2M1054 524.500h2" stroke="#bbb" />
                <g fontFamily="Liberation Sans, Noto Sans CJK SC" fontSize={12} fill="#8a8a8a">
                  <text x={1099} y={490} textAnchor="end">30000</text>
                  <text x={1099} y={516} textAnchor="end">20000</text>
                  <text x={1099} y={541} textAnchor="end">10000</text>
                  <text x={1055} y={560}>X1万</text>
                </g>
                <path d="M1054 548.500h30.500v14" fill="none" stroke={LINE} />
              </svg>
            </Axis>
          </Panel>

          <Panel>
            <Plot>
              <Legend $h={16}>
                <Fold />
                <span>MACD(12,26,9)</span>
                <span>DIF: -36.50</span>
                <Swatch $c="#1b75c4">DEA: -29.42</Swatch>
                <Swatch $c="#701070">MACD: -14.15</Swatch>
              </Legend>
              <MacdChart />
            </Plot>
            <Axis $framed>
              <svg width={47} height={98} viewBox="1055 566 47 98">
                <path d="M1055 611.500h4" stroke="#999" />
                <text x={1099} y={616} fontFamily="Liberation Sans" fontSize={12} fill="#8a8a8a" textAnchor="end">0.00</text>
              </svg>
            </Axis>
          </Panel>

          <Bar $h={16}>
            <DateText>
              <svg width="100%" height={15} viewBox="1 667 1052 15" preserveAspectRatio="xMaxYMin meet">
                <path d="M208.500 667v15M459.500 667v15M722.500 667v15M914.500 667v15" stroke={LINE} />
                <path d="M271.500 667v2M334.500 667v2M396.500 667v2M525.500 667v2M591.500 667v2M656.500 667v2M770.500 667v2M818.500 667v2M866.500 667v2" stroke="#aaa" />
                <rect x={1035} y={667} width={15} height={15} fill="#b4efec" />
                <g fontFamily="Liberation Sans, Noto Sans CJK SC" fontSize={12} fill="#888">
                  <text x={7} y={679}>2019年</text>
                  <text x={209} y={679}>11</text>
                  <text x={460} y={679}>12</text>
                  <text x={723} y={679}>1</text>
                  <text x={916} y={679}>2</text>
                  <text x={1036} y={678} fill="#444">--</text>
                </g>
              </svg>
            </DateText>
            <DateCell>日线</DateCell>
          </Bar>

          <Bar $h={17}>
            {indicatorTabs.map((t) => <Tab key={t} $on={t === "MACD"}>{t}</Tab>)}
            <Spacer />
            <TemplateTab>模板</TemplateTab>
            <ZoomTab>+</ZoomTab>
            <ZoomTab>−</ZoomTab>
          </Bar>
          <Bar $h={18}>
            <Tab>扩展<Caret>∧</Caret></Tab>
            <WideTab>关联报价</WideTab>
            <WideTab>市场资讯</WideTab>
            <WideTab>板块资讯</WideTab>
          </Bar>
        </Charts>

        <Quote>
          <QuoteHead>
            <QuoteCode>G</QuoteCode>
            <svg width={10} height={10} viewBox="0 0 10 10">
              <path d="M1 1.500h7" stroke={R} /><path d="M2 5.500h5M1 9.500h7" stroke={G} />
            </svg>
            <b>999999</b>
            <QuoteName>上证指数</QuoteName>
            <Sig>SG1</Sig>
          </QuoteHead>
          <Flow>
            <FlowRow><FlowBar $w={10} $c={GREEN} /><FlowBar $w={38} $c={GREEN} /><Spacer />52.0亿</FlowRow>
            <FlowRow>
              <FlowBar $w={95} $c={RED} /><FlowBar $w={50} $c={RED} /><Spacer />146.0亿
              <svg width={6} height={8} viewBox="0 0 6 8"><path d="M2 0h2v4h2L3 8 0 4h2z" fill="#e01010" /></svg>
            </FlowRow>
          </Flow>
          <Group $h={79}>
            <table><tbody>
              {market.map(([n, v]) => <Row key={n} $h={19}><th>{n}</th><Value><b>{v}</b>亿</Value></Row>)}
            </tbody></table>
          </Group>
          <Group $h={231}>
            <table><tbody>
              {facts.map(([n, v, c, u]) => <Row key={n} $h={19}><th>{n}</th><Value $c={c}><b>{v}</b>{u}</Value></Row>)}
            </tbody></table>
          </Group>
          <Group $h={22}>
            <table><tbody>
              <Row $h={19}><th>涨家数</th><MidValue $pad={33}>跌家数</MidValue><Value $c={G}><b>1227</b></Value></Row>
            </tbody></table>
          </Group>
          <Group $h={42}>
            <table><tbody>
              <Row $h={19}><th>净流入额</th><MidValue $c={G} $pad={15}><b>-83.2</b>亿</MidValue><Value $c={G}><b>-6%</b></Value></Row>
              <Row $h={19}><th>大宗流入</th><MidValue $c={G} $pad={15}><b>-8.14</b>亿</MidValue><Value $c={G}><b>-3%</b></Value></Row>
            </tbody></table>
          </Group>
          <Group>
            <table><tbody>
              {ticks.map(([t, v, u], i) => <Row key={i} $h={18}><Time>{t}</Time><Value><b>{v}</b>{u}</Value></Row>)}
            </tbody></table>
          </Group>
          <QuoteTabs>
            {"笔价细势联值主筹".split("").map((t, i) => <QuoteTab key={t} $on={i === 0}>{t}</QuoteTab>)}
          </QuoteTabs>
        </Quote>

        <Side>
          {sideA.map((s) => <Cell key={s[0]} item={s} />)}
          <SideRule />
          {sideB.map((s) => <Cell key={s[0]} item={s} />)}
          <Cell item={["画线", pencil]} down />
          <SideRule />
          <Cell item={["F5", <>{frame}{label("F5", "#1e4fae", 10, 3)}</>]} />
          <Cell item={["刷新", <>{frame}<circle cx={9} cy={8.5} r={6} fill="#5cb85c" /><path d="M5 8c1-3 5-4 7-1M13 10c-1 3-5 4-7 1" fill="none" stroke="#fff" strokeWidth={1.6} /></>]} />
          {["1", "5", "15", "30", "60", "日", "周", "月"].map((t) => <SideButton key={t} $down={t === "日"}>{t}</SideButton>)}
        </Side>
      </Body>

      <Status>
        <svg width={13} height={12} viewBox="0 0 13 12"><path d="M0 1.500h12M0 6h12M0 10.500h12" stroke="#eee" strokeWidth={1.3} /></svg>
        <Indices>
          {indices.map(([n, a, b, c, v]) => (
            <Index key={n}>{n}<b>{a}</b><b>{b}</b><b>{c}</b>{v}</Index>
          ))}
        </Indices>
        <svg width={124} height={14} viewBox="0 0 124 14">
          {[22, 74].map((x) => (
            <g key={x}>
              <rect x={x + 13} y={1} width={10} height={5} fill="#f01010" />
              <rect x={x + 24} y={1} width={14} height={5} fill="#0a7a0a" />
              <rect x={x + 0.5} y={0.5} width={49} height={6} fill="none" stroke="#fff" />
              <path d={`M${x + 4} 9.500h46M${x + 4} 12.500h46`} stroke="#0a8a0a" strokeWidth={2} strokeDasharray="6 2" />
            </g>
          ))}
        </svg>
        <Badge>3</Badge>
        已连接
        <Spacer />
        <svg width={22} height={11} viewBox="0 0 22 11"><path d="M0 0h14v11H0z" fill="#666" /><path d="M0 1l7 5 7-5" fill="none" stroke="#292929" strokeWidth={1.3} /></svg>
        <Ime>
          <Sogou size={26} />
          <b>中</b>
          <b>°,</b>
          <svg width={16} height={16} viewBox="0 0 16 16"><circle cx={8} cy={8} r={7} fill="none" stroke="#1d6fc0" strokeWidth={1.6} /><path d="M4.500 9c1 4 6 4 7 0" fill="none" stroke="#1d6fc0" strokeWidth={1.4} /><path d="M5 5h2v2H5zM9 5h2v2H9z" fill="#1d6fc0" /></svg>
          <svg width={12} height={16} viewBox="0 0 12 16"><rect x={3.5} y={0} width={5} height={9} rx={2.5} fill="#1d6fc0" /><path d="M1 6c0 7 10 7 10 0M6 11v4M3 15h6" fill="none" stroke="#1d6fc0" strokeWidth={1.5} /></svg>
          <svg width={16} height={12} viewBox="0 0 16 12"><rect width={16} height={12} rx={1} fill="#1d6fc0" /><path d="M2 3.500h12M2 6h12" stroke="#fff" strokeWidth={1.2} strokeDasharray="1.500 1" /><path d="M4 9h8" stroke="#fff" /></svg>
          <svg width={16} height={14} viewBox="0 0 16 14"><circle cx={6} cy={3} r={3} fill="#b9c6d6" /><path d="M0 14c0-8 12-8 12 0z" fill="#b9c6d6" /><rect x={6} y={7} width={10} height={7} fill="#8fa3bb" />{glyph("19", 7, 13, 7, "#fff")}</svg>
          <Shirt size={14} c="#1d6fc0" />
          <Squares c="#1d6fc0" />
        </Ime>
      </Status>

      <Taskbar>
        <Task $w={37} aria-label="开始"><svg width={16} height={16} viewBox="0 0 16 16"><path d="M0 2l7-1v6.500H0zM8 1l8-1v7.500H8zM0 8.500h7V15l-7-1zM8 8.500h8V16l-8-1z" fill="#fff" /></svg></Task>
        <Task $w={39} aria-label="搜索"><svg width={17} height={17} viewBox="0 0 17 17"><circle cx={10.5} cy={6.5} r={5} fill="none" stroke="#fff" strokeWidth={1.4} /><path d="M7 10l-6 6" stroke="#fff" strokeWidth={1.4} /></svg></Task>
        <Task $w={36} $bg="#a5672f" $line="#f07818" aria-label="微信">
          <svg width={18} height={16} viewBox="0 0 18 16"><ellipse cx={7} cy={6} rx={6.5} ry={5.5} fill="#7ed321" /><ellipse cx={12} cy={10} rx={5.5} ry={4.5} fill="#f2f2f2" /><path d="M4 4h1.500v1.500H4zM8 4h1.500v1.500H8zM10 8h1v1h-1zM13 8h1v1h-1z" fill="#333" /></svg>
        </Task>
        <Task $w={38} $gap={4} aria-label="Edge">
          <svg width={16} height={17} viewBox="0 0 16 17"><path d="M1 8C2 2 6 1 9 1c4 0 6 4 6 8H6c0 4 4 5 8 3v3c-6 3-12 1-12-5 0-2 1-4 4-5-2 1-3 1-5 3zm5-1h5c0-4-5-4-5 0z" fill="#1f7fdc" /></svg>
        </Task>
        <Task $w={28} $gap={5} $line="#6aa8e0" aria-label="Chrome">
          <svg width={15} height={15} viewBox="0 0 16 16"><circle cx={8} cy={8} r={8} fill="#34a853" /><path d="M1 4a8 8 0 0 1 14 0H8L5 9z" fill="#ea4335" /><path d="M15 4.500A8 8 0 0 1 8 16l3.500-7L8 4.500z" fill="#fbbc05" /><circle cx={8} cy={8} r={3.8} fill="#fff" /><circle cx={8} cy={8} r={2.8} fill="#4285f4" /></svg>
        </Task>
        <Task $w={36} $gap={5} $bg="#4c6068" $line="#6aa8e0" aria-label="行情软件">
          <svg width={16} height={16} viewBox="0 0 16 16"><rect width={16} height={16} rx={2} fill="#e83a1c" /><path d="M4 5h7l-4 4 5 3M3 12l4-3" fill="none" stroke="#fff" strokeWidth={1.6} /><circle cx={11} cy={3} r={1.2} fill="#fff" /></svg>
        </Task>
        <Task $w={28} $line="#6aa8e0" aria-label="记事本">
          <svg width={15} height={16} viewBox="0 0 15 16"><path d="M3 2h11l-2 13H1z" fill="#bfe3ee" /><path d="M3 2h11" stroke="#eee" strokeWidth={2} strokeDasharray="1.500 1" /><path d="M4 6h8M4 8.500h7M3.500 11h7" stroke="#7ab" /></svg>
        </Task>
        <Tray>
          <TrayItem $w={22} aria-label="更多图标"><svg width={13} height={8} viewBox="0 0 13 8"><path d="M1 7l5.500-5.500L12 7" fill="none" stroke="#fff" strokeWidth={1.5} /></svg></TrayItem>
          <TrayItem $w={27} $gap={18} aria-label="芯片"><svg width={15} height={13} viewBox="0 0 15 13"><path d="M2 1h3v2h5V1h3v3h2v5h-2v3h-3v-2H5v2H2V9H0V4h2z" fill="#22d04a" /><path d="M4 3l2 1 1-1 2 2 2-1v5l-2-1-2 2-2-2-1 1z" fill="#3a2a70" /></svg></TrayItem>
          <TrayItem $w={32} aria-label="安全"><svg width={16} height={16} viewBox="0 0 16 16"><circle cx={8} cy={8} r={8} fill="#4aa88a" /><path d="M5 3v10M8 5v9M11 3v10" stroke="#e0f4ea" strokeWidth={1.8} /></svg></TrayItem>
          <svg width={24} height={14} viewBox="0 0 24 14"><rect x={0.5} y={0.5} width={22} height={12} fill="none" stroke="#fff" /><path d="M3 3.500h18M3 6.500h18" stroke="#fff" strokeDasharray="1.500 1.500" /><path d="M6 9.500h11" stroke="#fff" /></svg>
          <TrayItem $w={32}>中</TrayItem>
          <TrayItem $w={26} aria-label="搜狗"><Sogou size={17} /></TrayItem>
          <TrayItem $w={54}>11:33</TrayItem>
          <TrayItem $w={30} aria-label="通知"><svg width={16} height={16} viewBox="0 0 16 16"><path d="M0 1h16v11h-6l-3 3v-3H0z" fill="#fff" /><path d="M3 4.500h10M3 6.500h10M3 8.500h7" stroke="#18243c" /></svg></TrayItem>
        </Tray>
      </Taskbar>

      <Palette aria-label="画线工具">
        <PaletteTop><CloseButton aria-label="关闭工具">x</CloseButton></PaletteTop>
        <ToolGrid>
          {tools.map(([n, g], i) =>
            g ? (
              <Tool key={i} aria-label={n}><svg width={16} height={16} viewBox="0 0 16 16">{g}</svg></Tool>
            ) : (
              <span key={i} />
            )
          )}
        </ToolGrid>
      </Palette>

      <Pointer width={32} height={36} viewBox="0 0 32 36">
        <circle cx={14.5} cy={15} r={14.5} fill="#4fa858" fillOpacity={0.8} />
        <path d="M15.500 15.500v15l3.500-3.500 2.500 6 2.500-1-2.500-6h5z" fill="#fff" stroke="#111" />
      </Pointer>
    </Page>
  );
}
